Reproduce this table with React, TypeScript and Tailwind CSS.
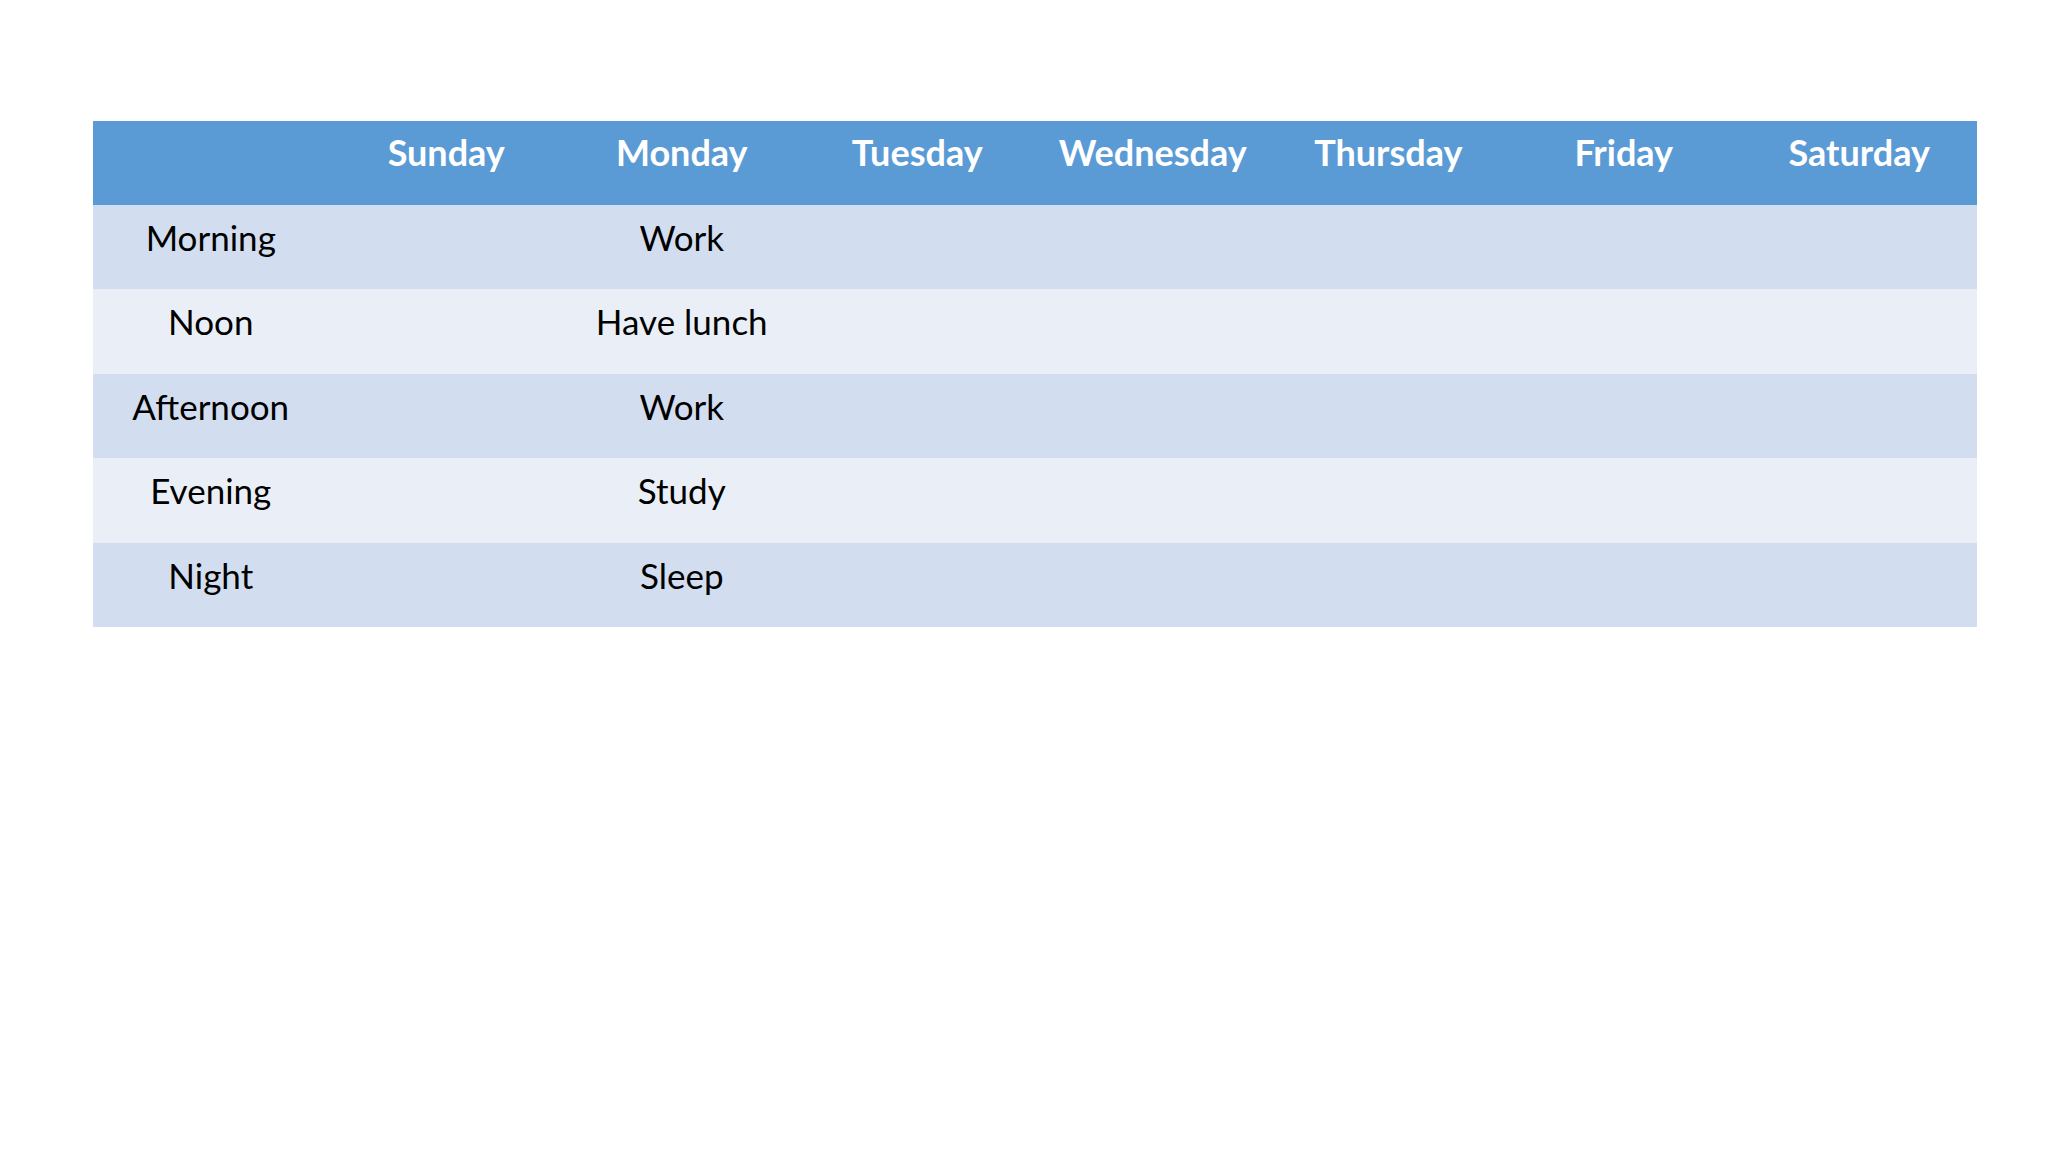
const days = ['Sunday', 'Monday', 'Tuesday', 'Wednesday', 'Thursday', 'Friday', 'Saturday'];

const rows: { label: string; cells: string[] }[] = [
  { label: 'Morning', cells: ['', 'Work', '', '', '', '', ''] },
  { label: 'Noon', cells: ['', 'Have lunch', '', '', '', '', ''] },
  { label: 'Afternoon', cells: ['', 'Work', '', '', '', '', ''] },
  { label: 'Evening', cells: ['', 'Study', '', '', '', '', ''] },
  { label: 'Night', cells: ['', 'Sleep', '', '', '', '', ''] },
];

export default function App() {
  return (
    <div className="w-[2048px] h-[1152px] bg-white pt-[121px] pl-[93px] font-['Lato','Liberation_Sans',sans-serif]">
      <div className="w-[1884px] flex flex-col">
        <div className="grid grid-cols-8 h-[84px] bg-[#5b9bd5] text-white font-bold">
          <div />
          {days.map((d) => (
            <div key={d} className="text-center text-[36px] leading-[46px] pt-[8px]">
              {d}
            </div>
          ))}
        </div>
        {rows.map((r, i) => (
          <div
            key={r.label}
            className={`grid grid-cols-8 h-[84.4px] text-black ${i % 2 === 0 ? 'bg-[#d2deef]' : 'bg-[#eaeff7]'}`}
          >
            <div className="text-center text-[35px] leading-[46px] pt-[9px]">{r.label}</div>
            {r.cells.map((c, j) => (
              <div key={j} className="text-center text-[35px] leading-[46px] pt-[9px]">
                {c}
              </div>
            ))}
          </div>
        ))}
      </div>
    </div>
  );
}
